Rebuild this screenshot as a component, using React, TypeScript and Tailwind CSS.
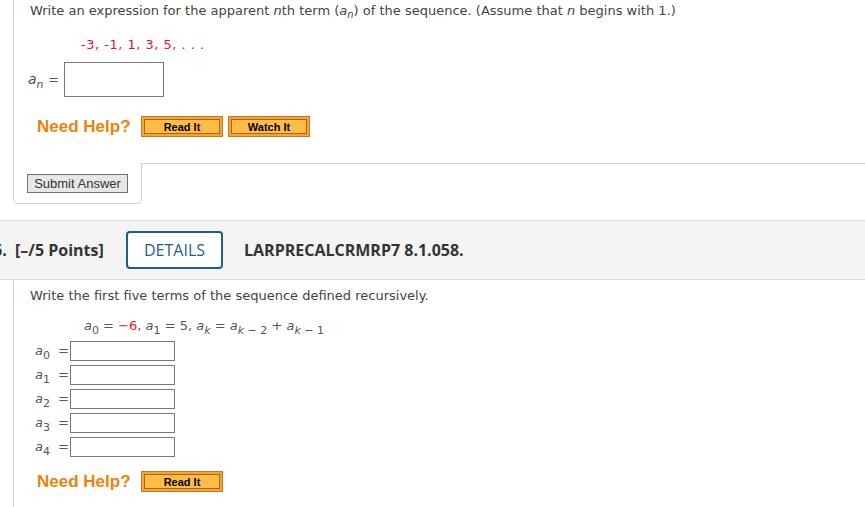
import React from "react";

const body = { fontFamily: '"DejaVu Sans", Verdana, sans-serif' };
const head = { fontFamily: '"Open Sans", sans-serif' };
const arial = { fontFamily: '"Liberation Sans", Arial, sans-serif' };

function HelpButton({ label, w }: { label: string; w: string }) {
  return (
    <div className={`${w} h-[21px] border border-[#c6792c] bg-[#f7a52d] p-[2px]`}>
      <div
        className="flex h-full items-center justify-center border border-[#a86418] bg-[#ffbd45] text-[11px] font-bold text-black"
        style={arial}
      >
        {label}
      </div>
    </div>
  );
}

function NeedHelp({ watch }: { watch?: boolean }) {
  return (
    <div className="flex items-center">
      <span className="ml-[23px] w-[104px] text-[17px] font-bold text-[#ec8308]" style={arial}>
        Need Help?
      </span>
      <HelpButton label="Read It" w="w-[82px]" />
      {watch && (
        <div className="ml-[5px]">
          <HelpButton label="Watch It" w="w-[82px]" />
        </div>
      )}
    </div>
  );
}

function TermRow({ i }: { i: number }) {
  return (
    <div className="flex h-[24px] items-center">
      <span className="ml-[21px] w-[23px] text-[13px] text-[#555]">
        <i>a</i>
        <span className="relative top-[4px] text-[11px]">{i}</span>
      </span>
      <span className="w-[12px] text-[13px] text-[#555]">=</span>
      <div className="h-[20px] w-[105px] border border-[#7a7a7a] bg-white" />
    </div>
  );
}

export default function App() {
  return (
    <div className="h-[507px] w-[865px] overflow-hidden bg-white text-[#444]" style={body}>
      {/* question 5 */}
      <div className="ml-[13px] h-[164px] border-b border-l border-[#cfcfcf]">
        <p className="pl-[16px] pt-[2px] text-[13px] leading-[18px]">
          Write an expression for the apparent <i>n</i>th term (<i>a</i>
          <span className="relative top-[3px] text-[10px] italic">n</span>) of the sequence. (Assume that{" "}
          <i>n</i> begins with 1.)
        </p>
        <p className="mt-[15px] pl-[67px] text-[13px] leading-[18px] tracking-[0.5px] text-[#e8141b]">
          -3, -1, 1, 3, 5, . . .
        </p>
        <div className="mt-[8px] flex items-center">
          <span className="ml-[14px] w-[20px] text-[14px] text-[#555]">
            <i>a</i>
            <span className="relative top-[4px] text-[11px] italic">n</span>
          </span>
          <span className="w-[16px] text-[13px] text-[#555]">=</span>
          <div className="h-[35px] w-[100px] border border-[#7a7a7a]" />
        </div>
        <div className="mt-[17px]">
          <NeedHelp watch />
        </div>
      </div>
      <div className="ml-[13px] -mt-px h-[41px] w-[129px] rounded-b-[5px] border-b border-l border-r border-[#cfcfcf] bg-white pl-[13px] pt-[11px]">
        <div
          className="flex h-[19px] w-[101px] items-center justify-center border border-[#707070] bg-[#e7e7e7] text-[13px] text-[#333]"
          style={arial}
        >
          Submit Answer
        </div>
      </div>

      {/* question 6 header */}
      <div
        className="mt-[16px] flex h-[60px] items-center border-b border-t border-[#dcdcdc] bg-[#f4f4f4]"
        style={head}
      >
        <span className="-ml-[7px] w-[133px] whitespace-pre text-[16px] font-bold text-[#333]">
          6.  [–/5 Points]
        </span>
        <div className="flex h-[38px] w-[97px] items-center justify-center rounded-[4px] border-2 border-[#1b5f8e] bg-white text-[16px] font-medium text-[#1b5f8e]">
          DETAILS
        </div>
        <span className="ml-[21px] text-[16px] font-bold text-[#333]">LARPRECALCRMRP7 8.1.058.</span>
      </div>

      {/* question 6 body */}
      <div className="ml-[13px] h-[240px] border-l border-[#cfcfcf]">
        <p className="pl-[16px] pt-[7px] text-[13px] leading-[18px]">
          Write the first five terms of the sequence defined recursively.
        </p>
        <p className="mt-[12px] pl-[70px] text-[13px] leading-[18px] text-[#555]">
          <i>a</i>
          <span className="relative top-[4px] text-[11px]">0</span> = <span className="text-[#e8141b]">−6</span>,{" "}
          <i>a</i>
          <span className="relative top-[4px] text-[11px]">1</span> = 5, <i>a</i>
          <span className="relative top-[4px] text-[11px] italic">k</span> = <i>a</i>
          <span className="relative top-[4px] text-[11px]">
            <i>k</i> − 2
          </span>{" "}
          + <i>a</i>
          <span className="relative top-[4px] text-[11px]">
            <i>k</i> − 1
          </span>
        </p>
        <div className="mt-[3px]">
          {[0, 1, 2, 3, 4].map((i) => (
            <TermRow key={i} i={i} />
          ))}
        </div>
        <div className="mt-[10px]">
          <NeedHelp />
        </div>
      </div>
    </div>
  );
}
